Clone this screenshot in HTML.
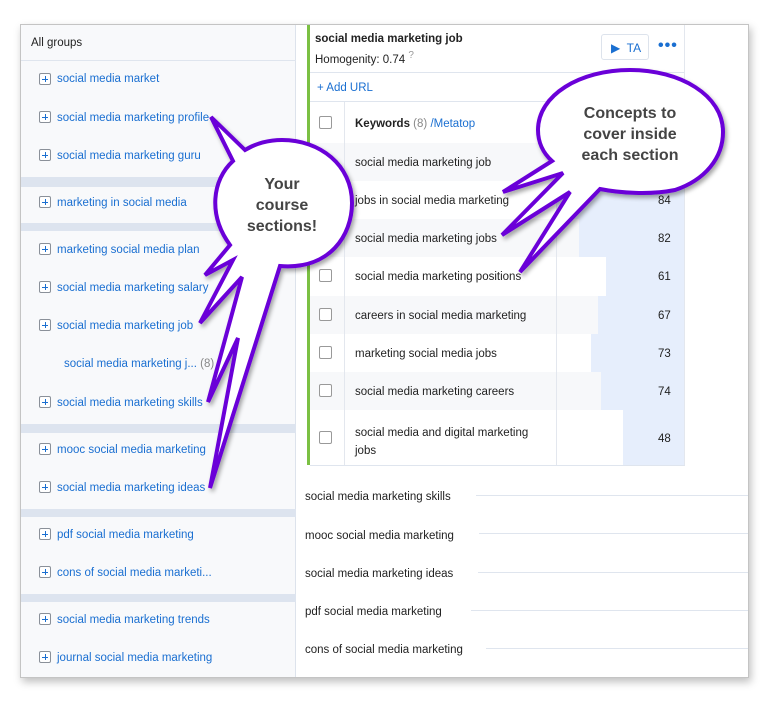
<!DOCTYPE html>
<html><head><meta charset="utf-8"><style>
*{margin:0;padding:0;box-sizing:border-box}
body{width:769px;height:723px;background:#fff;font-family:"Liberation Sans",sans-serif;position:relative;overflow:hidden}
.frame{position:absolute;left:20px;top:24px;width:729px;height:654px;border:1px solid #c4c4c4;box-shadow:2px 4px 8px rgba(0,0,0,.25);background:#fff;overflow:hidden}
.left{position:absolute;left:0;top:0;width:275px;height:654px;background:#f8f9fb;border-right:1px solid #dde3ec}
.t{position:absolute;font-size:11.5px;white-space:nowrap;margin-top:2px}
.g{color:#1a6fd1}
.pl{position:absolute;width:12px;height:12px;border:1px solid #8a9099;border-radius:2px;background:#fff}
.pl:before{content:"";position:absolute;left:2px;top:4.5px;width:6px;height:1.5px;background:#1a6fd1}
.pl:after{content:"";position:absolute;left:4.5px;top:2px;width:1.5px;height:6px;background:#1a6fd1}
.band{position:absolute;left:0;width:275px;background:#dde4ef}
.cb{position:absolute;width:13px;height:13px;border:1px solid #999;border-radius:2px;background:#fff}
.row{position:absolute;left:289px;width:375px}
.bar{position:absolute;background:#e6eefc}
.hl{position:absolute;height:1px;background:#dfe5ee}
</style></head><body>
<div class="frame">
<div class="left">
<div class="t" style="left:10px;top:10px;color:#222">All groups</div>
<div class="hl" style="left:0;top:35px;width:275px"></div>
<div class="band" style="top:152px;height:10px"></div>
<div class="band" style="top:198px;height:8px"></div>
<div class="band" style="top:399px;height:9px"></div>
<div class="band" style="top:484px;height:8px"></div>
<div class="band" style="top:569px;height:8px"></div>
</div>
<div class="t" style="left:294px;top:6px;font-weight:bold;color:#222">social media marketing job</div>
<div class="t" style="left:294px;top:23px;color:#222">Homogenity: 0.74 <sup style="color:#999;font-size:10px">?</sup></div>
<div style="position:absolute;left:580px;top:9px;width:48px;height:26px;border:1px solid #dde3ec;border-radius:3px;font-size:12px;color:#1a6fd1;padding:6px 0 0 9px">▶&nbsp; TA</div>
<div class="t" style="left:637px;top:10px;color:#1a6fd1;font-size:16px;font-weight:bold;letter-spacing:1px">•••</div>
<div class="hl" style="left:289px;top:47px;width:375px"></div>
<div class="t g" style="left:296px;top:55px">+ Add URL</div>
<div class="hl" style="left:289px;top:76px;width:375px"></div>
<div class="row" style="top:77px;height:41px;background:#fff"></div>
<div class="row" style="top:118px;height:38px;background:#f7f8fa"></div>
<div class="row" style="top:194px;height:38px;background:#f7f8fa"></div>
<div class="row" style="top:271px;height:38px;background:#f7f8fa"></div>
<div class="row" style="top:347px;height:38px;background:#f7f8fa"></div>
<div class="bar" style="left:535px;top:156px;width:129px;height:38px"></div>
<div class="bar" style="left:558px;top:194px;width:106px;height:38px"></div>
<div class="bar" style="left:585px;top:232px;width:79px;height:39px"></div>
<div class="bar" style="left:577px;top:271px;width:87px;height:38px"></div>
<div class="bar" style="left:570px;top:309px;width:94px;height:38px"></div>
<div class="bar" style="left:580px;top:347px;width:84px;height:38px"></div>
<div class="bar" style="left:602px;top:385px;width:62px;height:55px"></div>
<div style="position:absolute;left:286px;top:0;width:3px;height:440px;background:#7bc043"></div>
<div style="position:absolute;left:323px;top:77px;width:1px;height:363px;background:#e3e7ee"></div>
<div style="position:absolute;left:535px;top:77px;width:1px;height:363px;background:#e3e7ee"></div>
<div style="position:absolute;left:663px;top:0;width:1px;height:440px;background:#e3e7ee"></div>
<div class="hl" style="left:289px;top:440px;width:375px"></div>
<div class="cb" style="left:298px;top:91px"></div>
<div class="t" style="left:334px;top:91px;color:#222;font-weight:bold">Keywords <span style="font-weight:normal;color:#888">(8)</span> <span style="font-weight:normal;color:#1a6fd1">/Metatop</span></div>
<div class="t" style="left:334px;top:130px;color:#222">social media marketing job</div>
<div class="t" style="left:334px;top:168px;color:#222">jobs in social media marketing</div>
<div class="t" style="left:334px;top:206px;color:#222">social media marketing jobs</div>
<div class="t" style="left:334px;top:244px;color:#222">social media marketing positions</div>
<div class="t" style="left:334px;top:283px;color:#222">careers in social media marketing</div>
<div class="t" style="left:334px;top:321px;color:#222">marketing social media jobs</div>
<div class="t" style="left:334px;top:359px;color:#222">social media marketing careers</div>
<div class="t" style="left:334px;top:397px;color:#222;line-height:18px">social media and digital marketing<br>jobs</div>
<div class="cb" style="left:298px;top:244px"></div>
<div class="cb" style="left:298px;top:283px"></div>
<div class="cb" style="left:298px;top:321px"></div>
<div class="cb" style="left:298px;top:359px"></div>
<div class="cb" style="left:298px;top:406px"></div>
<div class="t" style="left:637px;top:168px;color:#222">84</div>
<div class="t" style="left:637px;top:206px;color:#222">82</div>
<div class="t" style="left:637px;top:244px;color:#222">61</div>
<div class="t" style="left:637px;top:283px;color:#222">67</div>
<div class="t" style="left:637px;top:321px;color:#222">73</div>
<div class="t" style="left:637px;top:359px;color:#222">74</div>
<div class="t" style="left:637px;top:406px;color:#222">48</div>
<div class="t" style="left:284px;top:464px;color:#222">social media marketing skills</div><div class="hl" style="left:455px;top:470px;width:280px"></div>
<div class="t" style="left:284px;top:503px;color:#222">mooc social media marketing</div><div class="hl" style="left:458px;top:508px;width:280px"></div>
<div class="t" style="left:284px;top:541px;color:#222">social media marketing ideas</div><div class="hl" style="left:457px;top:547px;width:280px"></div>
<div class="t" style="left:284px;top:579px;color:#222">pdf social media marketing</div><div class="hl" style="left:450px;top:585px;width:280px"></div>
<div class="t" style="left:284px;top:617px;color:#222">cons of social media marketing</div><div class="hl" style="left:465px;top:623px;width:280px"></div>
</div>
<div class="pl" style="left:39px;top:73px"></div><div class="t g" style="left:57px;top:71px">social media market</div>
<div class="pl" style="left:39px;top:111px"></div><div class="t g" style="left:57px;top:110px">social media marketing profile</div>
<div class="pl" style="left:39px;top:149px"></div><div class="t g" style="left:57px;top:148px">social media marketing guru</div>
<div class="pl" style="left:39px;top:196px"></div><div class="t g" style="left:57px;top:195px">marketing in social media</div>
<div class="pl" style="left:39px;top:243px"></div><div class="t g" style="left:57px;top:242px">marketing social media plan</div>
<div class="pl" style="left:39px;top:281px"></div><div class="t g" style="left:57px;top:280px">social media marketing salary</div>
<div class="pl" style="left:39px;top:319px"></div><div class="t g" style="left:57px;top:318px">social media marketing job</div>
<div class="t g" style="left:64px;top:356px">social media marketing j... <span style="color:#888">(8)</span></div>
<div class="pl" style="left:39px;top:396px"></div><div class="t g" style="left:57px;top:395px">social media marketing skills</div>
<div class="pl" style="left:39px;top:443px"></div><div class="t g" style="left:57px;top:442px">mooc social media marketing</div>
<div class="pl" style="left:39px;top:481px"></div><div class="t g" style="left:57px;top:480px">social media marketing ideas</div>
<div class="pl" style="left:39px;top:528px"></div><div class="t g" style="left:57px;top:527px">pdf social media marketing</div>
<div class="pl" style="left:39px;top:566px"></div><div class="t g" style="left:57px;top:565px">cons of social media marketi...</div>
<div class="pl" style="left:39px;top:613px"></div><div class="t g" style="left:57px;top:612px">social media marketing trends</div>
<div class="pl" style="left:39px;top:651px"></div><div class="t g" style="left:57px;top:650px">journal social media marketing</div>
<svg width="769" height="723" style="position:absolute;left:0;top:0" viewBox="0 0 769 723">
<defs><filter id="s" x="-20%" y="-20%" width="140%" height="140%"><feDropShadow dx="2" dy="3" stdDeviation="2" flood-color="#000" flood-opacity="0.35"/></filter></defs>
<g fill="#fff" stroke="#6a00d8" stroke-width="4" stroke-linejoin="miter" filter="url(#s)">
<path d="M245,150 L211,117 L233,161 C212,180 208,215 230,245 L205,275 L233,260 L200,323 L242,277 L208,402 L238,338 L210,488 L280,266 C330,270 352,235 352,203 C352,165 320,140 282,140 C268,140 255,144 245,150 Z"/>
<path d="M552,161 L503,192 L563,173 L502,235 L570,192 L520,272 L600,189 C620,193 650,195 675,190 C705,180 723,158 723,132 C723,95 680,70 630,70 C580,70 538,95 538,130 C538,142 543,153 552,161 Z"/>
</g>
<g font-family="Liberation Sans, sans-serif" font-weight="bold" font-size="16" fill="#444" text-anchor="middle">
<text x="282" y="189">Your</text><text x="282" y="210">course</text><text x="282" y="231">sections!</text>
<text x="630" y="118">Concepts to</text><text x="630" y="139">cover inside</text><text x="630" y="160">each section</text>
</g>
</svg>
</body></html>
